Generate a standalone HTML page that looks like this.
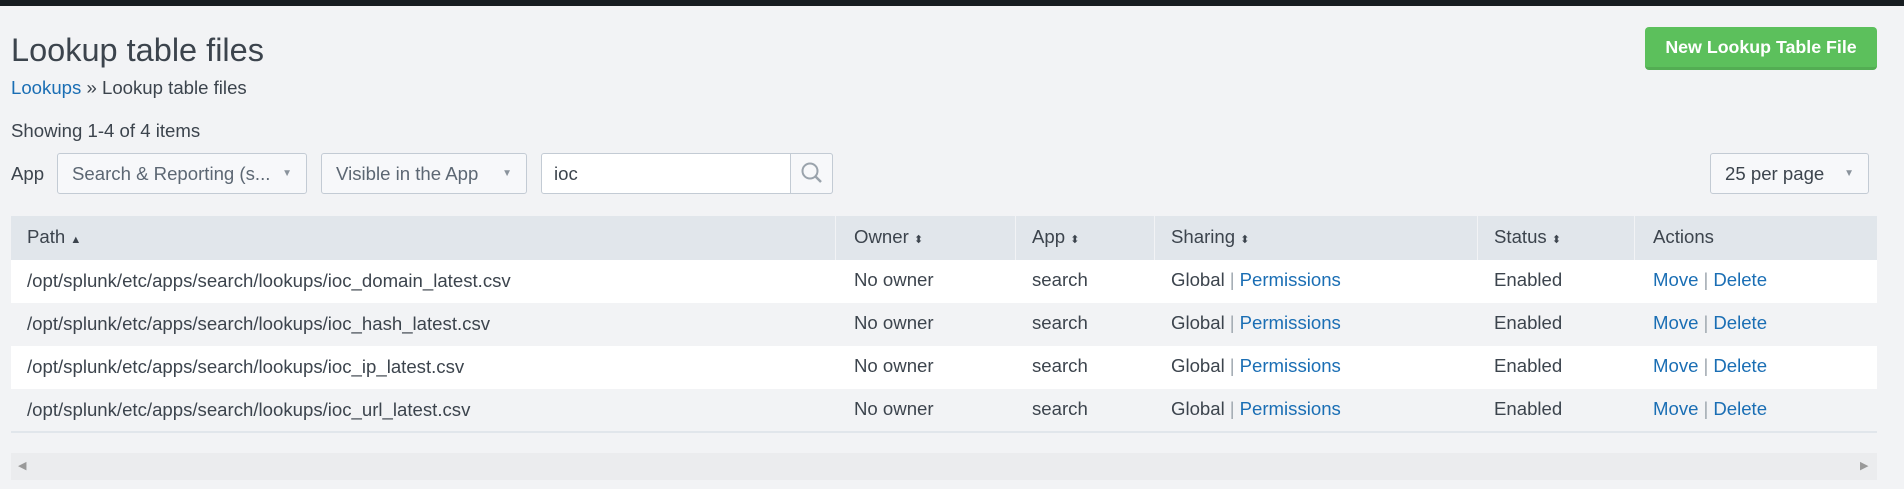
<!DOCTYPE html>
<html><head><style>
*{box-sizing:border-box;margin:0;padding:0}
body{width:1904px;height:489px;background:#f2f3f5;font-family:"Liberation Sans",sans-serif;color:#3c444d;position:relative;overflow:hidden;font-size:18.6px}
.a{position:absolute;white-space:nowrap}
a{color:#1a6eb4;text-decoration:none}
.top{left:0;top:0;width:1904px;height:6px;background:#171d21}
.btn{left:1645px;top:27px;width:232px;height:43px;background:#5cc05c;border-radius:4px;border-bottom:3px solid #53ad53;color:#fff;font-weight:bold;font-size:17.8px;text-align:center;line-height:41px}
.sel{background:#f7f8fa;border:1px solid #c3cbd4;border-radius:3px;height:41px;line-height:39px;padding-left:14px;color:#5c6773}
.sel .c{position:absolute;right:14px;font-size:10px;color:#8a939c}
.hdr{left:11px;top:216px;width:1866px;height:44px;background:#e1e6eb}
.row{left:11px;width:1866px;height:43px}
.vl{top:216px;width:1px;height:44px;background:#f2f3f5}
.s{font-size:11px}
.sep{color:#a0a8b0;margin:0 5px}
</style></head><body>
<div class="a top"></div>
<div class="a" style="left:11px;top:32px;font-size:32.5px;color:#3c444d">Lookup table files</div>
<div class="a" style="left:11px;top:77px"><a>Lookups</a> » Lookup table files</div>
<div class="a btn">New Lookup Table File</div>
<div class="a" style="left:11px;top:120px">Showing 1-4 of 4 items</div>
<div class="a" style="left:11px;top:163px">App</div>
<div class="a sel" style="left:57px;top:153px;width:250px">Search &amp; Reporting (s...<span class="c">▼</span></div>
<div class="a sel" style="left:321px;top:153px;width:206px">Visible in the App<span class="c">▼</span></div>
<div class="a" style="left:541px;top:153px;width:292px;height:41px;background:#fff;border:1px solid #c3cbd4;border-radius:3px;padding-left:12px;line-height:39px;color:#3c444d">ioc</div>
<div class="a" style="left:790px;top:153px;width:43px;height:41px;background:#f7f8fa;border:1px solid #c3cbd4;border-radius:0 3px 3px 0">
<svg width="41" height="39" viewBox="0 0 41 39"><circle cx="19" cy="17" r="7.5" fill="none" stroke="#9aa3ac" stroke-width="2"/><line x1="24.5" y1="22.5" x2="30" y2="28" stroke="#9aa3ac" stroke-width="2.5"/></svg></div>
<div class="a sel" style="left:1710px;top:153px;width:159px;color:#3c444d">25 per page<span class="c">▼</span></div>
<div class="a hdr"></div>
<div class="a vl" style="left:835px"></div><div class="a vl" style="left:1015px"></div><div class="a vl" style="left:1154px"></div><div class="a vl" style="left:1477px"></div><div class="a vl" style="left:1634px"></div>
<div class="a" style="left:27px;top:226px">Path <span class="s">▲</span></div>
<div class="a" style="left:854px;top:226px">Owner <span class="s">⬍</span></div>
<div class="a" style="left:1032px;top:226px">App <span class="s">⬍</span></div>
<div class="a" style="left:1171px;top:226px">Sharing <span class="s">⬍</span></div>
<div class="a" style="left:1494px;top:226px">Status <span class="s">⬍</span></div>
<div class="a" style="left:1653px;top:226px">Actions</div>
<div class="a row" style="top:260px;background:#fff"></div>
<div class="a row" style="top:346px;background:#fff"></div>
<div class="a" style="left:11px;top:431px;width:1866px;height:2px;background:#e1e6eb"></div>
<div class="a" style="left:27px;top:270px">/opt/splunk/etc/apps/search/lookups/ioc_domain_latest.csv</div>
<div class="a" style="left:27px;top:313px">/opt/splunk/etc/apps/search/lookups/ioc_hash_latest.csv</div>
<div class="a" style="left:27px;top:356px">/opt/splunk/etc/apps/search/lookups/ioc_ip_latest.csv</div>
<div class="a" style="left:27px;top:399px">/opt/splunk/etc/apps/search/lookups/ioc_url_latest.csv</div>
<div class="a" style="left:854px;top:270px;line-height:43px;margin-top:-12px">No owner<br>No owner<br>No owner<br>No owner</div>
<div class="a" style="left:1032px;top:270px;line-height:43px;margin-top:-12px">search<br>search<br>search<br>search</div>
<div class="a" style="left:1171px;top:270px;line-height:43px;margin-top:-12px">Global<span class="sep">|</span><a>Permissions</a><br>Global<span class="sep">|</span><a>Permissions</a><br>Global<span class="sep">|</span><a>Permissions</a><br>Global<span class="sep">|</span><a>Permissions</a></div>
<div class="a" style="left:1494px;top:270px;line-height:43px;margin-top:-12px">Enabled<br>Enabled<br>Enabled<br>Enabled</div>
<div class="a" style="left:1653px;top:270px;line-height:43px;margin-top:-12px"><a>Move</a><span class="sep">|</span><a>Delete</a><br><a>Move</a><span class="sep">|</span><a>Delete</a><br><a>Move</a><span class="sep">|</span><a>Delete</a><br><a>Move</a><span class="sep">|</span><a>Delete</a></div>
<div class="a" style="left:11px;top:453px;width:1866px;height:27px;background:#ebecee"></div>
<div class="a" style="left:18px;top:459px;font-size:11px;color:#999">◀</div>
<div class="a" style="left:1860px;top:459px;font-size:11px;color:#999">▶</div>
</body></html>
